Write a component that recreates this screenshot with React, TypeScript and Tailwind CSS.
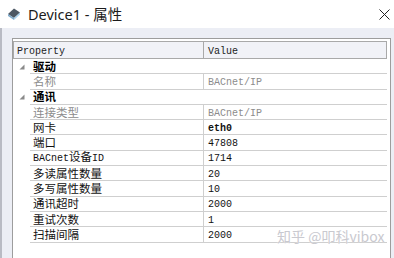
import React from "react";

type Row =
  | { kind: "cat"; label: string }
  | { kind: "prop"; label: string; value: string; muted?: boolean; bold?: boolean };

const rows: Row[] = [
  { kind: "cat", label: "驱动" },
  { kind: "prop", label: "名称", value: "BACnet/IP", muted: true },
  { kind: "cat", label: "通讯" },
  { kind: "prop", label: "连接类型", value: "BACnet/IP", muted: true },
  { kind: "prop", label: "网卡", value: "eth0", bold: true },
  { kind: "prop", label: "端口", value: "47808" },
  { kind: "prop", label: "BACnet设备ID", value: "1714" },
  { kind: "prop", label: "多读属性数量", value: "20" },
  { kind: "prop", label: "多写属性数量", value: "10" },
  { kind: "prop", label: "通讯超时", value: "2000" },
  { kind: "prop", label: "重试次数", value: "1" },
  { kind: "prop", label: "扫描间隔", value: "2000" },
];

const CJK = /([\u3400-\u9fff]+)/;

// SimSun-ish look: CJK at full size, latin half width
function Mixed({ text }: { text: string }) {
  return (
    <span className="font-['Noto_Sans_CJK_SC',sans-serif] text-[11.5px] leading-[13px]">
      {text
        .split(CJK)
        .filter(Boolean)
        .map((part, i) =>
          CJK.test(part) ? (
            <span key={i}>{part}</span>
          ) : (
            <span key={i} className="font-['Liberation_Mono','Noto_Sans_CJK_SC',monospace] text-[10px]">
              {part}
            </span>
          )
        )}
    </span>
  );
}

function Expander() {
  return (
    <svg width="6" height="6" viewBox="0 0 6 6">
      <polygon points="5.5,0.5 5.5,5.5 0.5,5.5" fill="#8a8a8a" />
    </svg>
  );
}

function DeviceIcon() {
  return (
    <svg width="14" height="14" viewBox="0 0 14 14">
      <polygon points="1,7 7,1.5 13,5.5 7,11" fill="#4d5864" />
      <polygon points="1,7 7,11 7,13 1,9" fill="#7fa9c9" />
      <polygon points="7,11 13,5.5 13,7.5 7,13" fill="#a9d2ee" />
    </svg>
  );
}

export default function App() {
  return (
    <div className="relative h-[258px] w-[394px] overflow-hidden bg-[#eceef5] text-[11.5px] leading-[13px] text-[#1a1a1a]">
      <div className="flex h-[28px] items-center bg-white pl-[7px] pr-[3px]">
        <DeviceIcon />
        <span className="ml-[7px] font-['Noto_Sans','Noto_Sans_CJK_SC',sans-serif] text-[14.5px] leading-none text-[#1b1b1b]">
          Device1 - 属性
        </span>
        <svg className="ml-auto mr-[1px]" width="11" height="11" viewBox="0 0 11 11">
          <path d="M0.5 0.5 L10.5 10.5 M10.5 0.5 L0.5 10.5" stroke="#222" strokeWidth="1" />
        </svg>
      </div>

      <div className="h-[230px] border-l-2 border-[#b9bbc4] pl-[10px] pr-[3px] pt-[10px]">
        <div className="h-full border-x border-t border-[#9d9d9d] bg-white pr-[3px] pt-[2px]">
          <div className="flex h-[18px] items-center border border-[#a9a9a9] bg-[#f1f2f7] text-[#222]">
            <div className="flex h-full w-[190px] items-center border-r border-[#a9a9a9] pl-[3px]">
              <Mixed text="Property" />
            </div>
            <div className="flex h-full items-center pl-[4px]">
              <Mixed text="Value" />
            </div>
          </div>

          {rows.map((row) =>
            row.kind === "cat" ? (
              <div key={row.label} className="flex h-[15.3px]">
                <div className="flex w-[17px] items-center pl-[6px]">
                  <Expander />
                </div>
                <div className="flex flex-1 items-center border-b border-[#cfcfcf] pl-[3px] font-bold text-black">
                  <Mixed text={row.label} />
                </div>
              </div>
            ) : (
              <div key={row.label} className={`flex h-[15.3px] ${row.muted ? "text-[#8c8c8c]" : "text-[#111]"}`}>
                <div className="w-[17px]" />
                <div className="flex w-[173px] items-center border-b border-[#cfcfcf] pl-[3px]">
                  <Mixed text={row.label} />
                </div>
                <div className={`flex flex-1 items-center border-b border-l border-[#cfcfcf] pl-[4px] ${row.bold ? "font-bold" : ""}`}>
                  <Mixed text={row.value} />
                </div>
              </div>
            )
          )}
        </div>
      </div>

      <div className="absolute left-[277px] top-[229px] font-['Noto_Sans_CJK_SC',sans-serif] text-[14px] leading-none text-[#c9c9cf] [text-shadow:0_0_1px_#fff]">
        知乎 @叩科vibox
      </div>
    </div>
  );
}
